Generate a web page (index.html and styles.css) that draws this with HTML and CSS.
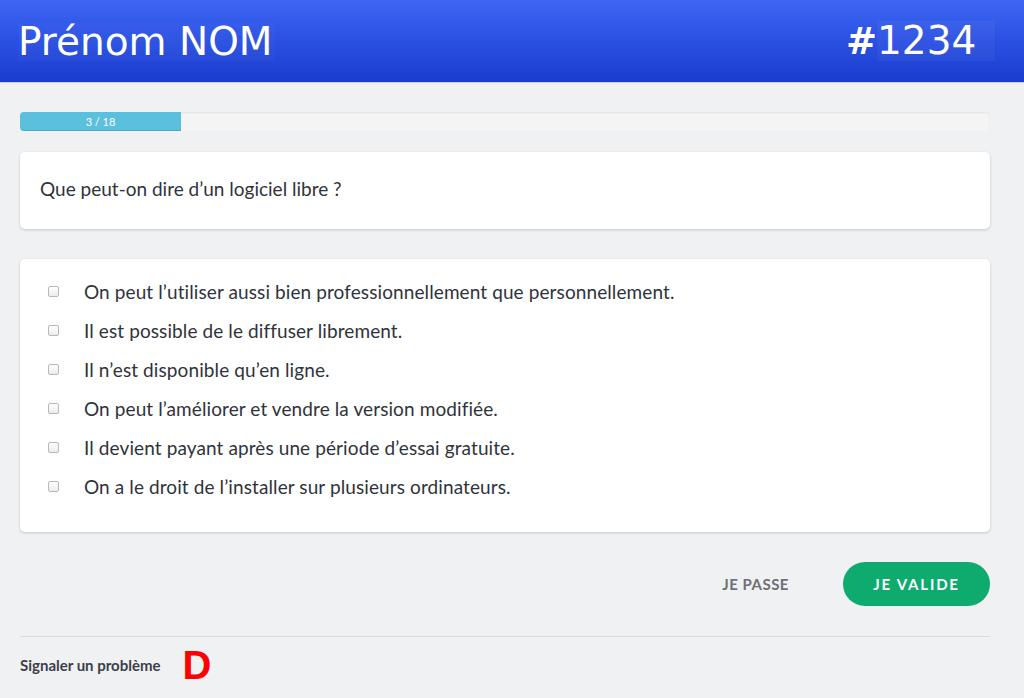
FILE: index.html
```html
<!DOCTYPE html>
<html lang="fr">
<head>
<meta charset="utf-8">
<title>Quiz</title>
<link rel="stylesheet" href="styles.css">
</head>
<body>
<header class="topbar">
  <div class="name"><span class="name-field">Prénom NOM</span></div>
  <div class="id"><span class="hash">#</span><span class="id-field">1234</span></div>
</header>
<main class="content">
  <div class="progress">
    <div class="progress-fill" style="width:16.6%">3 / 18</div>
  </div>
  <section class="card question">Que peut-on dire d’un logiciel libre ?</section>
  <section class="card answers">
    <label class="answer"><span class="box"></span><span>On peut l’utiliser aussi bien professionnellement que personnellement.</span></label>
    <label class="answer"><span class="box"></span><span>Il est possible de le diffuser librement.</span></label>
    <label class="answer"><span class="box"></span><span>Il n’est disponible qu’en ligne.</span></label>
    <label class="answer"><span class="box"></span><span>On peut l’améliorer et vendre la version modifiée.</span></label>
    <label class="answer"><span class="box"></span><span>Il devient payant après une période d’essai gratuite.</span></label>
    <label class="answer"><span class="box"></span><span>On a le droit de l’installer sur plusieurs ordinateurs.</span></label>
  </section>
  <div class="actions">
    <button class="btn-skip">JE PASSE</button>
    <button class="btn-validate">JE VALIDE</button>
  </div>
  <footer class="footer">
    <span class="report">Signaler un problème</span>
    <span class="badge-d">D</span>
  </footer>
</main>
</body>
</html>
```
FILE: styles.css
```css
* { box-sizing: border-box; }
html, body { margin: 0; padding: 0; }
body {
  background: #f0f1f3;
  font-family: Lato, "Liberation Sans", sans-serif;
  color: #333;
  width: 1024px;
  height: 698px;
  overflow: hidden;
}
.topbar {
  height: 83px;
  background: linear-gradient(to bottom, #3d66f2 0%, #2a50e2 50%, #1a3ccf 100%);
  display: flex;
  align-items: center;
  justify-content: space-between;
  padding: 0 29px 0 18px;
  color: #fff;
  font-family: "DejaVu Sans", sans-serif;
  font-size: 39px;
  border-bottom: 1px solid #c8d0e8;
}
.name-field {
  display: inline-block;
  background: rgba(255,255,255,0.025);
  padding: 0 2px 0 0;
  line-height: 38px;
}
.id { display: flex; align-items: center; }
.hash { font-weight: bold; font-size: 37px; }
.id-field {
  display: inline-block;
  width: 118px;
  line-height: 40px;
  background: rgba(255,255,255,0.04);
}
.content {
  width: 970px;
  margin-left: 20px;
  padding-top: 29px;
}
.progress {
  height: 19px;
  background: #f4f4f4;
  border-radius: 4px;
  box-shadow: inset 0 1px 2px rgba(0,0,0,0.08);
  overflow: hidden;
}
.progress-fill {
  height: 100%;
  background: #5bc0de;
  color: #fff;
  font-size: 11px;
  line-height: 19px;
  text-align: center;
  box-shadow: inset 0 -1px 0 rgba(0,0,0,0.12);
}
.card {
  background: #fff;
  border-radius: 5px;
  box-shadow: 0 1px 3px rgba(0,0,0,0.18);
}
.question {
  margin-top: 21px;
  height: 77px;
  padding: 0 20px 4px;
  display: flex;
  align-items: center;
  font-size: 19px;
  color: #2f333b;
}
.answers {
  margin-top: 30px;
  padding: 13px 0 26px 28px;
  display: flex;
  flex-direction: column;
}
.answer {
  display: flex;
  align-items: center;
  height: 39px;
  font-size: 19px;
  letter-spacing: 0.1px;
  color: #2f333b;
}
.box {
  width: 11px;
  height: 11px;
  border: 1px solid #b8b8b8;
  border-radius: 2px;
  background: linear-gradient(#fff, #ececec);
  margin-right: 25px;
  flex: none;
}
.actions {
  display: flex;
  justify-content: flex-end;
  align-items: center;
  margin-top: 30px;
  height: 44px;
}
.btn-skip {
  background: none;
  border: 0;
  font-family: Lato, "Liberation Sans", sans-serif;
  font-weight: bold;
  font-size: 15px;
  color: #6f6f78;
  letter-spacing: 0.5px;
  margin-right: 54px;
  padding: 0;
}
.btn-validate {
  width: 147px;
  height: 44px;
  border: 0;
  border-radius: 22px;
  background: #0faa6e;
  color: #fff;
  font-family: Lato, "Liberation Sans", sans-serif;
  font-weight: bold;
  font-size: 15px;
  letter-spacing: 1.8px;
}
.footer {
  margin-top: 30px;
  border-top: 1px solid #d8d9dc;
  display: flex;
  align-items: center;
  height: 58px;
  padding-bottom: 2px;
}
.report {
  font-size: 15px;
  font-weight: bold;
  color: #3b3f4c;
  margin-right: 22px;
}
.badge-d {
  font-family: "Liberation Sans", Arial, sans-serif;
  font-weight: bold;
  font-size: 40px;
  color: #f00;
  line-height: 1;
}
```
